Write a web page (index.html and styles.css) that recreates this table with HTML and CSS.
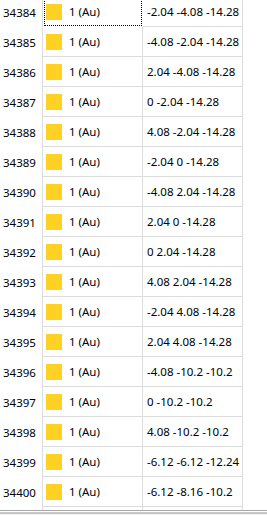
FILE: index.html
```html
<!DOCTYPE html>
<html>
<head>
<meta charset="utf-8">
<link rel="stylesheet" href="styles.css">
</head>
<body>
<div class="grid">
  <div class="row"><div class="num">34384</div><div class="el focus"><span class="sw"></span><span>1 (Au)</span></div><div class="pos">-2.04 -4.08 -14.28</div></div>
  <div class="row"><div class="num">34385</div><div class="el"><span class="sw"></span><span>1 (Au)</span></div><div class="pos">-4.08 -2.04 -14.28</div></div>
  <div class="row"><div class="num">34386</div><div class="el"><span class="sw"></span><span>1 (Au)</span></div><div class="pos">2.04 -4.08 -14.28</div></div>
  <div class="row"><div class="num">34387</div><div class="el"><span class="sw"></span><span>1 (Au)</span></div><div class="pos">0 -2.04 -14.28</div></div>
  <div class="row"><div class="num">34388</div><div class="el"><span class="sw"></span><span>1 (Au)</span></div><div class="pos">4.08 -2.04 -14.28</div></div>
  <div class="row"><div class="num">34389</div><div class="el"><span class="sw"></span><span>1 (Au)</span></div><div class="pos">-2.04 0 -14.28</div></div>
  <div class="row"><div class="num">34390</div><div class="el"><span class="sw"></span><span>1 (Au)</span></div><div class="pos">-4.08 2.04 -14.28</div></div>
  <div class="row"><div class="num">34391</div><div class="el"><span class="sw"></span><span>1 (Au)</span></div><div class="pos">2.04 0 -14.28</div></div>
  <div class="row"><div class="num">34392</div><div class="el"><span class="sw"></span><span>1 (Au)</span></div><div class="pos">0 2.04 -14.28</div></div>
  <div class="row"><div class="num">34393</div><div class="el"><span class="sw"></span><span>1 (Au)</span></div><div class="pos">4.08 2.04 -14.28</div></div>
  <div class="row"><div class="num">34394</div><div class="el"><span class="sw"></span><span>1 (Au)</span></div><div class="pos">-2.04 4.08 -14.28</div></div>
  <div class="row"><div class="num">34395</div><div class="el"><span class="sw"></span><span>1 (Au)</span></div><div class="pos">2.04 4.08 -14.28</div></div>
  <div class="row"><div class="num">34396</div><div class="el"><span class="sw"></span><span>1 (Au)</span></div><div class="pos">-4.08 -10.2 -10.2</div></div>
  <div class="row"><div class="num">34397</div><div class="el"><span class="sw"></span><span>1 (Au)</span></div><div class="pos">0 -10.2 -10.2</div></div>
  <div class="row"><div class="num">34398</div><div class="el"><span class="sw"></span><span>1 (Au)</span></div><div class="pos">4.08 -10.2 -10.2</div></div>
  <div class="row"><div class="num">34399</div><div class="el"><span class="sw"></span><span>1 (Au)</span></div><div class="pos">-6.12 -6.12 -12.24</div></div>
  <div class="row"><div class="num">34400</div><div class="el"><span class="sw"></span><span>1 (Au)</span></div><div class="pos">-6.12 -8.16 -10.2</div></div>
  <div class="row stub"><div class="num"></div><div class="el"></div><div class="pos"></div></div>
</div>
<div class="hbar"></div>
</body>
</html>
```

FILE: styles.css
```css
html, body {
  margin: 0;
  padding: 0;
  background: #fff;
  overflow: hidden;
}
body {
  width: 267px;
  height: 515px;
  font-family: "Noto Sans", "Liberation Sans", sans-serif;
  font-size: 11.5px;
  color: #000;
}
.grid {
  margin-top: -3px;
  height: 513px;
  overflow: hidden;
}
.row {
  display: flex;
  height: 30px;
}
.row > div {
  box-sizing: border-box;
  display: flex;
  align-items: center;
  white-space: nowrap;
}
.num {
  width: 43px;
  padding-left: 3px;
  border-right: 1px solid #dcdcdc;
}
.el {
  width: 100px;
  padding-left: 3px;
  border-right: 1px solid #dcdcdc;
  border-bottom: 1px solid #dcdcdc;
}
.pos {
  width: 100px;
  padding-left: 4px;
  border-right: 1px solid #dcdcdc;
  border-bottom: 1px solid #dcdcdc;
}
.sw {
  width: 16px;
  height: 16px;
  background: #ffd125;
  margin-right: 7px;
}
.focus {
  border-right-color: transparent;
  border-bottom-color: transparent;
  outline: 1px dotted #000;
  outline-offset: -2px;
}
.stub {
  height: 4px;
}
.stub > div {
  border-bottom: none;
}
.hbar {
  position: fixed;
  left: 0;
  right: 0;
  top: 510px;
  height: 5px;
  border-top: 1px solid #a8a8a8;
  background: linear-gradient(#fff 0, #fff 1px, #c8c8c8 1px, #c8c8c8 3px, #f0f0f0 3px);
}
```
